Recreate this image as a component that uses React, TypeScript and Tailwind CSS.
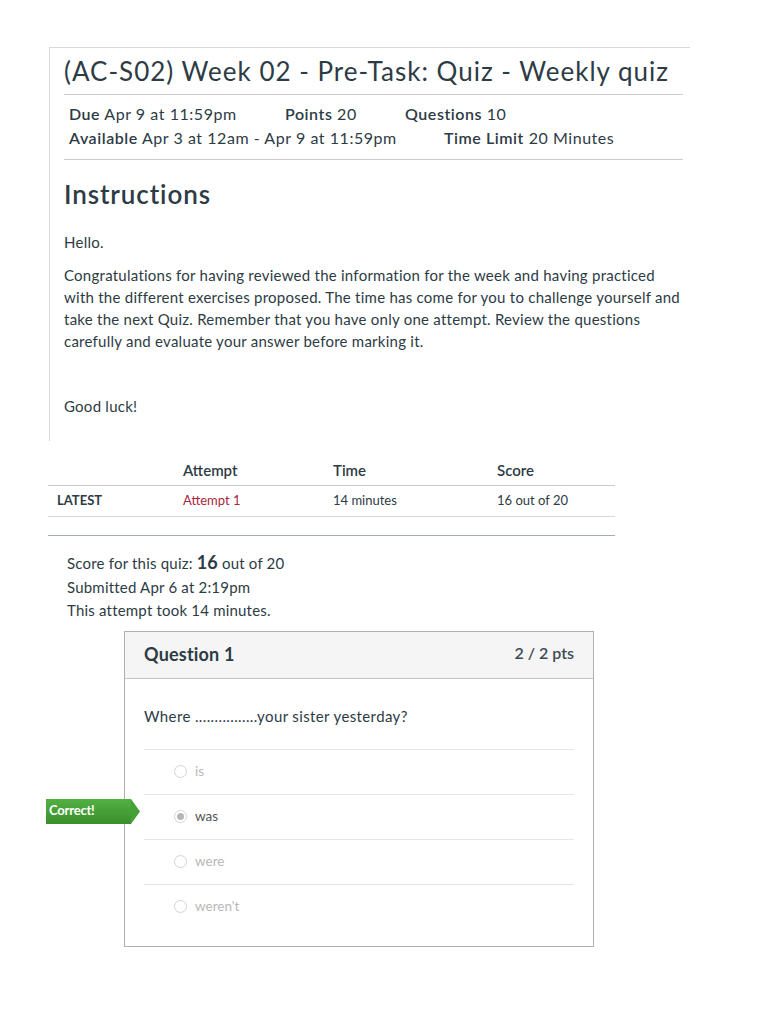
import React from "react";

const answers = [
  { text: "is", picked: false },
  { text: "was", picked: true },
  { text: "were", picked: false },
  { text: "weren't", picked: false },
];

function Radio({ checked }: { checked: boolean }) {
  return (
    <span className="flex h-[13px] w-[13px] items-center justify-center rounded-full border border-[#d4d4d4] bg-white">
      {checked && <span className="h-[7px] w-[7px] rounded-full bg-[#b5b5b5]" />}
    </span>
  );
}

function CorrectFlag() {
  return (
    <div className="absolute left-[-98px] top-[4px] flex h-[25px] items-center">
      <div className="flex h-[25px] w-[85px] items-center bg-gradient-to-b from-[#52b042] to-[#3a8f2c] pl-[3px] text-[13px] font-bold tracking-[-0.2px] text-white">
        Correct!
      </div>
      <svg width="9" height="25" viewBox="0 0 9 25" className="block">
        <path d="M0 0 L9 12.5 L0 25 Z" fill="#45a136" />
      </svg>
    </div>
  );
}

export default function App() {
  return (
    <div className="min-h-[1024px] bg-white pt-[47px] text-[#2d3b45]" style={{ fontFamily: "Lato, 'Open Sans', sans-serif" }}>
      <div className="ml-[49px] w-[641px] border-l border-t border-[#d6d9dc] pb-[24px] pl-[14px] pr-[7px]">
        <h1 className="border-b border-[#c7cdd1] pb-[6px] pt-[6px] text-[26px] leading-[34px] font-normal tracking-[1px]">
          (AC-S02) Week 02 - Pre-Task: Quiz - Weekly quiz
        </h1>
        <div className="border-b border-[#c7cdd1] pb-[9px] pl-[5px] pt-[7px] text-[16px] leading-[24px] tracking-[0.55px]">
          <div className="flex">
            <span className="w-[216px]"><b className="font-semibold">Due</b> Apr 9 at 11:59pm</span>
            <span className="w-[120px]"><b className="font-semibold">Points</b> 20</span>
            <span><b className="font-semibold">Questions</b> 10</span>
          </div>
          <div className="flex">
            <span className="w-[375px]"><b className="font-semibold">Available</b> Apr 3 at 12am - Apr 9 at 11:59pm</span>
            <span><b className="font-semibold">Time Limit</b> 20 Minutes</span>
          </div>
        </div>
        <h2 className="mt-[17px] text-[26px] leading-[34px] font-semibold tracking-[0.9px]">Instructions</h2>
        <div className="mt-[20px] w-[622px] text-[15px] leading-[22px] tracking-[0.25px]">
          <p>Hello.</p>
          <p className="mt-[11px]">
            Congratulations for having reviewed the information for the week and having practiced with the different
            exercises proposed. The time has come for you to challenge yourself and take the next Quiz. Remember that you
            have only one attempt. Review the questions carefully and evaluate your answer before marking it.
          </p>
          <p className="mt-[43px]">Good luck!</p>
        </div>
      </div>

      <div className="ml-[48px] mt-[18px] w-[567px] text-[14px]">
        <div className="grid grid-cols-[126px_150px_164px_127px] border-b border-[#c7cdd1] pb-[3px] text-[15px] font-semibold">
          <span />
          <span className="pl-[9px]">Attempt</span>
          <span className="pl-[9px]">Time</span>
          <span className="pl-[9px]">Score</span>
        </div>
        <div className="grid h-[31px] grid-cols-[126px_150px_164px_127px] items-center border-b border-[#d6d9dc] text-[13px]">
          <span className="pl-[9px] font-bold">LATEST</span>
          <span className="pl-[9px] text-[#a8273c]">Attempt 1</span>
          <span className="pl-[9px]">14 minutes</span>
          <span className="pl-[9px]">16 out of 20</span>
        </div>
        <div className="mt-[18px] border-b border-[#a5acb0]" />
      </div>

      <div className="ml-[67px] mt-[14px] text-[15px] tracking-[0.2px]">
        <p className="leading-[24px]">
          Score for this quiz: <b className="text-[18px] font-bold">16</b> out of 20
        </p>
        <p className="leading-[24px]">Submitted Apr 6 at 2:19pm</p>
        <p className="leading-[22px]">This attempt took 14 minutes.</p>
      </div>

      <div className="ml-[124px] mt-[10px] w-[470px] border border-[#b0b0b0]">
        <div className="flex h-[47px] items-center justify-between border-b border-[#c4c4c4] bg-[#f5f5f5] pl-[19px] pr-[19px]">
          <span className="text-[18px] font-bold tracking-[0.2px]">Question 1</span>
          <span className="mb-[4px] text-[16px] font-semibold text-[#3d4a54]">2 / 2 pts</span>
        </div>
        <div className="px-[19px] pb-[17px] pt-[26px]">
          <p className="mb-[22px] text-[15px] leading-[22px] tracking-[0.38px]">Where ................your sister yesterday?</p>
          {answers.map((a) => (
            <div key={a.text} className="relative flex h-[45px] items-center gap-[8px] border-t border-[#e6e6e6] pl-[30px]">
              {a.picked && <CorrectFlag />}
              <Radio checked={a.picked} />
              <span className={a.picked ? "text-[13.5px] text-[#555]" : "text-[13.5px] text-[#b8b8b8]"}>{a.text}</span>
            </div>
          ))}
        </div>
      </div>
    </div>
  );
}
